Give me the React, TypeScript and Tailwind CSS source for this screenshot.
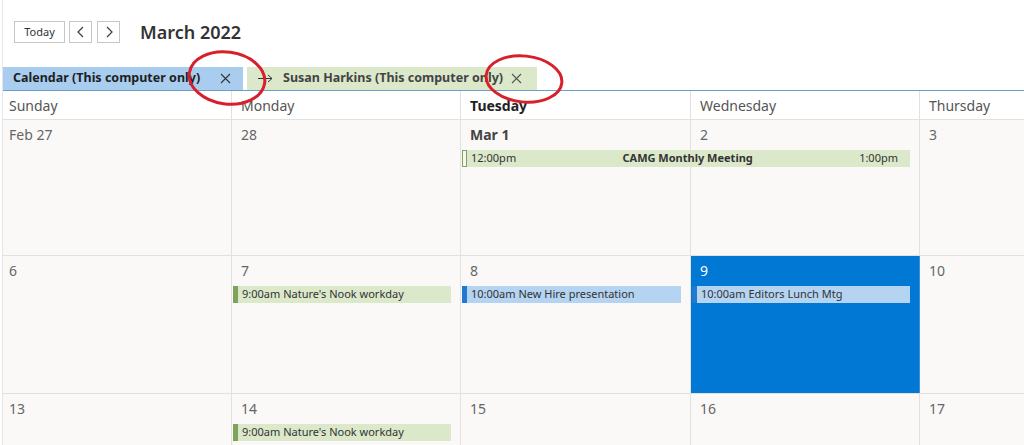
import React from "react";

type Ev = { col: number; span?: number; kind: "green" | "blue" | "span"; text: string };
type Week = { dates: string[]; boldDate?: number; selected?: number; events: Ev[] };

const cols = "grid-cols-[232px_229px_230px_229px_229px]";
const days = ["Sunday", "Monday", "Tuesday", "Wednesday", "Thursday"];

const weeks: Week[] = [
  {
    dates: ["Feb 27", "28", "Mar 1", "2", "3"],
    boldDate: 2,
    events: [{ col: 3, span: 2, kind: "span", text: "CAMG Monthly Meeting" }],
  },
  {
    dates: ["6", "7", "8", "9", "10"],
    selected: 3,
    events: [
      { col: 2, kind: "green", text: "9:00am Nature's Nook workday" },
      { col: 3, kind: "blue", text: "10:00am New Hire presentation" },
      { col: 4, kind: "blue", text: "10:00am Editors Lunch Mtg" },
    ],
  },
  {
    dates: ["13", "14", "15", "16", "17"],
    events: [{ col: 2, kind: "green", text: "9:00am Nature's Nook workday" }],
  },
];

const colStart = ["", "col-start-1", "col-start-2", "col-start-3", "col-start-4", "col-start-5"];

const CloseX = ({ color }: { color: string }) => (
  <svg width="11" height="11" viewBox="0 0 11 11">
    <path d="M1 1l9 9M10 1l-9 9" stroke={color} strokeWidth="1.1" />
  </svg>
);

const Event = ({ ev }: { ev: Ev }) => {
  if (ev.kind === "span") {
    return (
      <div className={`${colStart[ev.col]} col-span-2 row-start-2 ml-px mr-[10px] flex h-[17px] items-center bg-[#dbe8ca] text-[11px] text-[#333]`}>
        <div className="h-[17px] w-[5px] border border-[#7fa35a] bg-[#f4f8ef]" />
        <span className="ml-[4px]">12:00pm</span>
        <span className="flex-1 text-center font-bold text-[#333]">CAMG Monthly Meeting</span>
        <span className="mr-[12px]">1:00pm</span>
      </div>
    );
  }
  const green = ev.kind === "green";
  return (
    <div
      className={`${colStart[ev.col]} row-start-2 ml-px mr-[10px] flex h-[17px] items-center text-[11px] text-[#333] ${
        green ? "bg-[#dbe8ca]" : "bg-[#b4d4f2]"
      }`}
    >
      <div className={`h-full w-[5px] ${green ? "bg-[#7fa35a]" : "bg-[#1f7bd0]"}`} />
      <span className="ml-[4px] whitespace-nowrap">{ev.text}</span>
    </div>
  );
};

const WeekRow = ({ week, h }: { week: Week; h: string }) => (
  <div className={`grid ${cols} grid-rows-[30px_17px_1fr] ${h} border-b border-[#e3e1df]`}>
    {week.dates.map((d, i) => {
      const sel = week.selected === i;
      return (
        <div
          key={"c" + i}
          className={`${colStart[i + 1]} row-start-1 row-span-3 border-r ${
            sel ? "border-[#3b8fdb] bg-[#0078d4]" : "border-[#e3e1df] bg-[#faf9f8]"
          }`}
        />
      );
    })}
    {week.dates.map((d, i) => {
      const sel = week.selected === i;
      const bold = week.boldDate === i;
      return (
        <div
          key={"d" + i}
          className={`${colStart[i + 1]} row-start-1 pl-[9px] pt-[6px] text-[14px] leading-[18px] ${
            sel ? "text-white" : bold ? "font-bold text-[#444]" : "text-[#666]"
          }`}
        >
          {d}
        </div>
      );
    })}
    {week.events.map((ev, i) => (
      <Event key={"e" + i} ev={ev} />
    ))}
  </div>
);

export default function App() {
  return (
    <div
      className="relative ml-[2px] h-[445px] w-[1024px] overflow-hidden border-l border-[#e6e6e6] bg-white"
      style={{ fontFamily: '"Noto Sans", "Open Sans", sans-serif' }}
    >
      {/* toolbar */}
      <div className="flex h-[67px] items-start pl-[11px] pt-[21px]">
        <button className="flex h-[22px] w-[51px] items-center justify-center border border-[#c8c6c4] text-[11px] text-[#333]">
          Today
        </button>
        <button className="ml-[4px] flex h-[22px] w-[23px] items-center justify-center border border-[#c8c6c4]">
          <svg width="10" height="12" viewBox="0 0 10 12"><path d="M7 1L2 6l5 5" fill="none" stroke="#444" strokeWidth="1.3" /></svg>
        </button>
        <button className="ml-[5px] flex h-[22px] w-[23px] items-center justify-center border border-[#c8c6c4]">
          <svg width="10" height="12" viewBox="0 0 10 12"><path d="M3 1l5 5-5 5" fill="none" stroke="#444" strokeWidth="1.3" /></svg>
        </button>
        <div className="ml-[20px] -mt-[1px] text-[18px] font-semibold leading-[24px] text-[#333]">March 2022</div>
      </div>

      {/* calendar tabs */}
      <div className="-ml-[3px] flex h-[24px] border-b border-[#6c9ec6]">
        <div className="flex w-[243px] items-center bg-[#a8cdee] pl-[13px] text-[12.5px] font-bold text-[#1f1f1f]">
          <span className="flex-1">Calendar (This computer only)</span>
          <span className="mr-[12px]"><CloseX color="#333" /></span>
        </div>
        <div className="ml-[4px] flex w-[290px] items-center bg-[#dbe8ca] pl-[11px] text-[12.5px] font-bold text-[#444]">
          <svg width="15" height="9" viewBox="0 0 15 9">
            <path d="M0 4.5h14M10 1l4 3.5-4 3.5" fill="none" stroke="#333" strokeWidth="1" />
          </svg>
          <span className="ml-[10px] flex-1">Susan Harkins (This computer only)</span>
          <span className="mr-[15px]"><CloseX color="#555" /></span>
        </div>
      </div>

      {/* day names */}
      <div className={`-ml-[3px] grid ${cols} h-[29px] border-b border-[#e3e1df]`}>
        {days.map((d, i) => (
          <div
            key={d}
            className={`border-r border-[#e3e1df] pl-[9px] pt-[4px] text-[14px] ${
              i === 2 ? "font-bold text-[#222]" : "text-[#555]"
            }`}
          >
            {d}
          </div>
        ))}
      </div>

      <div className="-ml-[3px]">
        <WeekRow week={weeks[0]} h="h-[136px]" />
        <WeekRow week={weeks[1]} h="h-[138px]" />
        <WeekRow week={weeks[2]} h="h-[80px]" />
      </div>

      {/* red annotation circles */}
      <svg className="pointer-events-none absolute -left-[3px] top-0" width="1024" height="445">
        <ellipse cx="227" cy="78" rx="38" ry="26" transform="rotate(8 227 78)" fill="none" stroke="#d7202b" strokeWidth="3" />
        <ellipse cx="524" cy="79" rx="38" ry="23" transform="rotate(6 524 79)" fill="none" stroke="#d7202b" strokeWidth="3" />
      </svg>
    </div>
  );
}
